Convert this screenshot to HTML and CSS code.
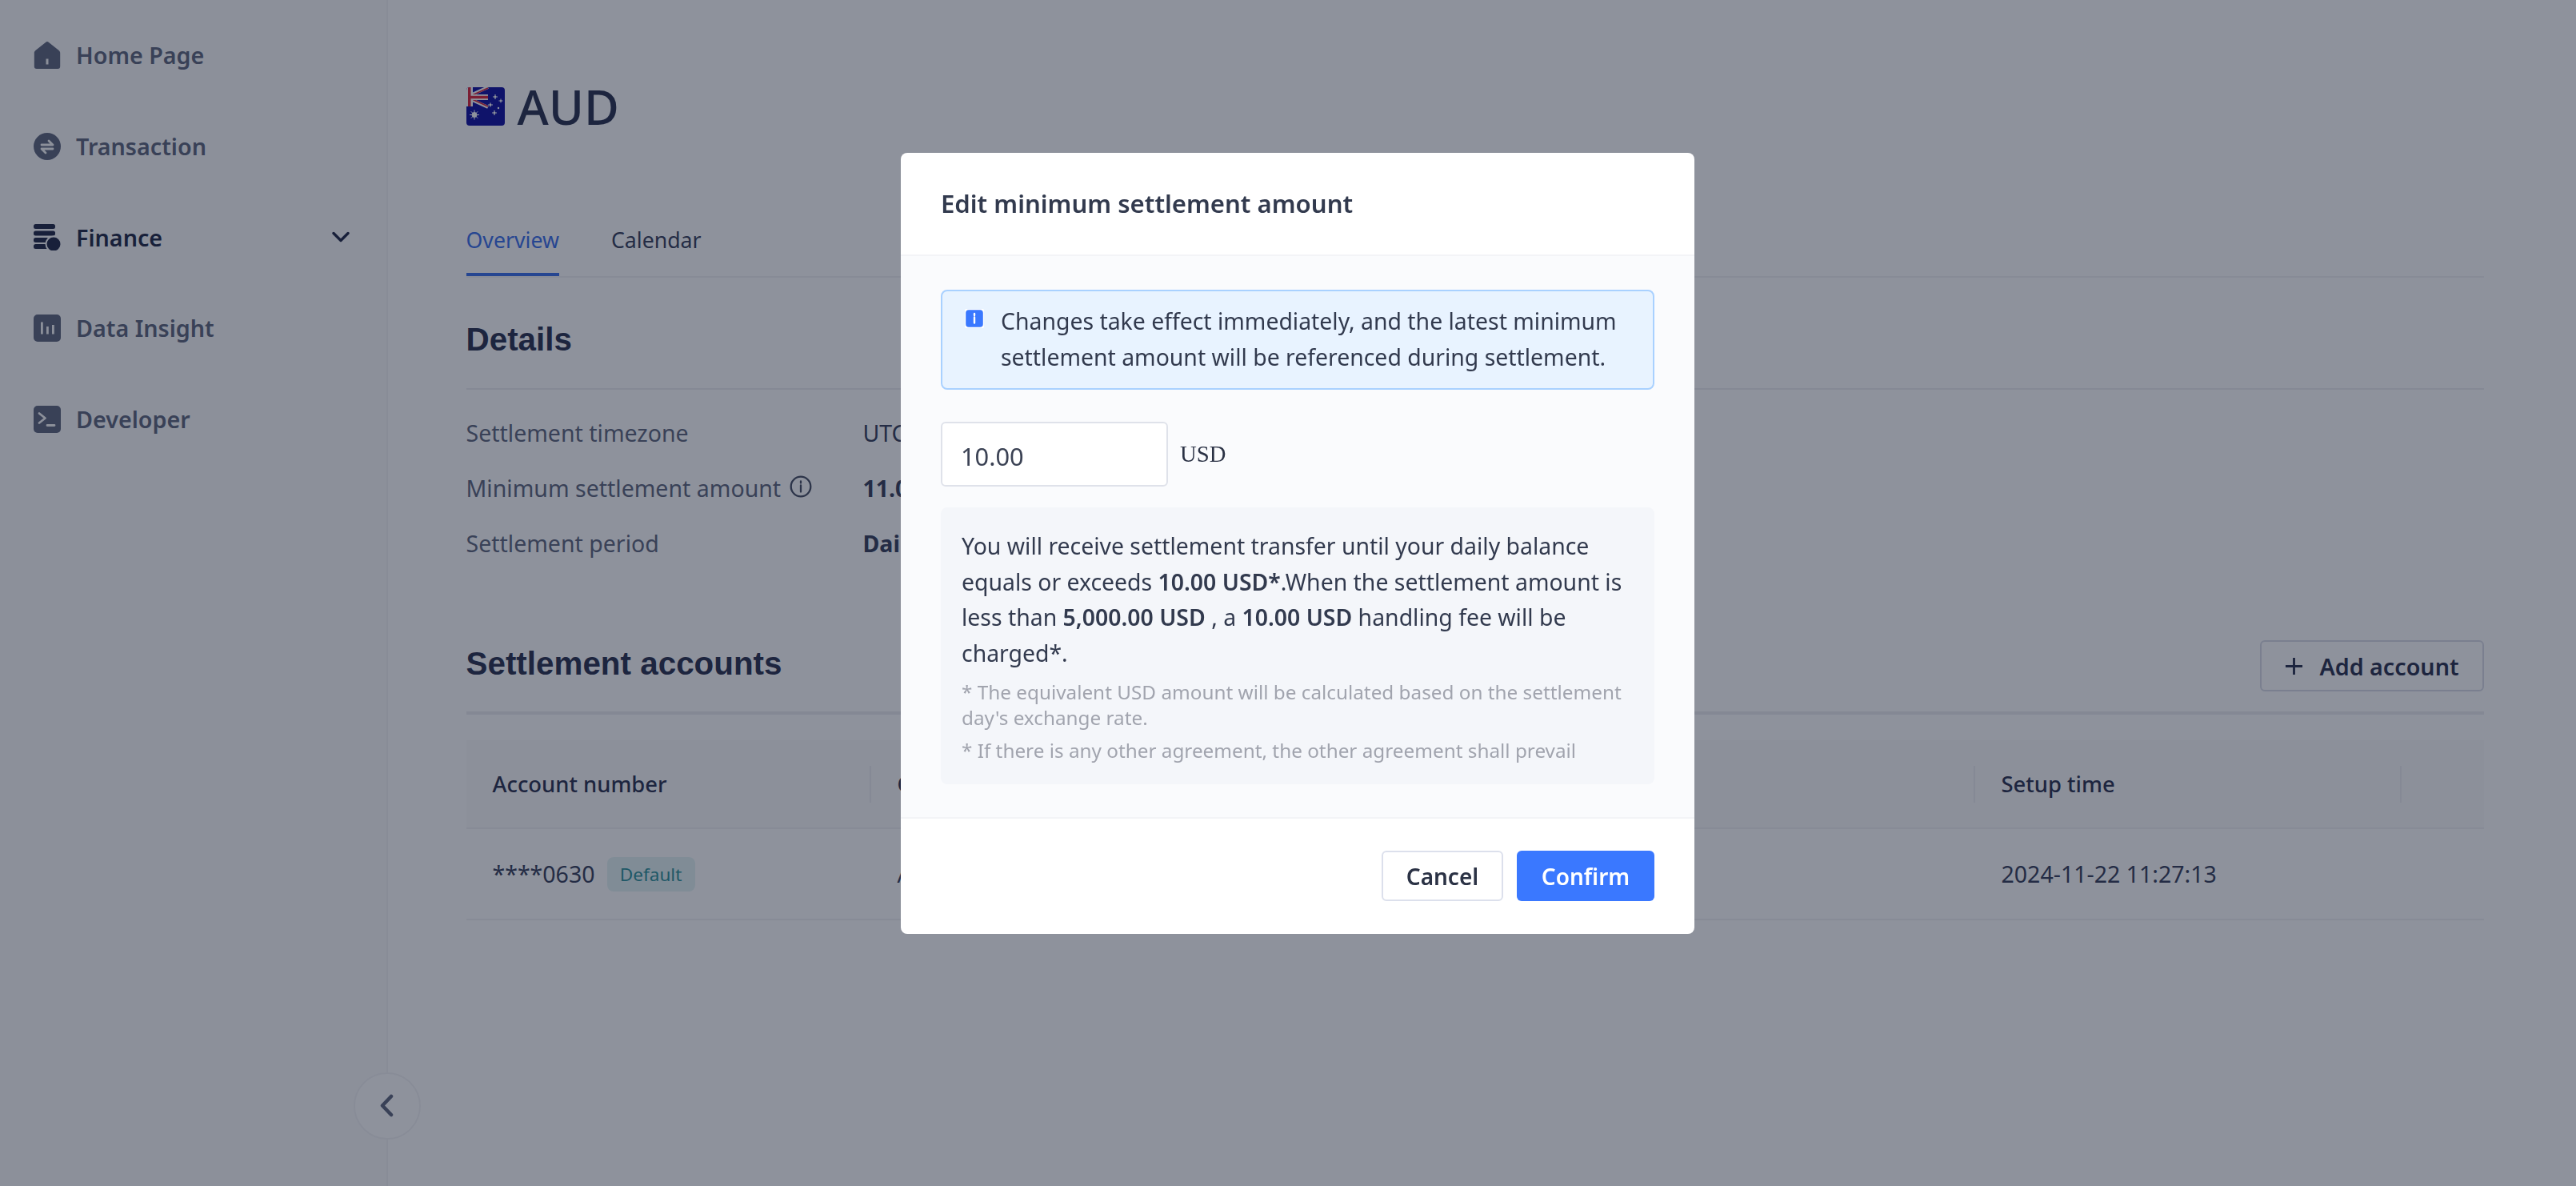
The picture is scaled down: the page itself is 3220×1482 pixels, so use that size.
FILE: index.html
```html
<!DOCTYPE html>
<html lang="en">
<head>
<meta charset="utf-8">
<title>AUD settlement</title>
<link rel="stylesheet" href="styles.css">
</head>
<body>
<div class="app">
  <aside class="sidebar">
    <nav class="nav">
      <a class="nav-item">
        <svg class="nav-icon" viewBox="0 0 34 34"><path fill-rule="evenodd" d="M15 .9a3.2 3.2 0 0 1 4 0l12.6 10.2c1 .8 1.6 2 1.6 3.3V31a3 3 0 0 1-3 3H3.800a3 3 0 0 1-3-3V14.400c0-1.300.6-2.500 1.600-3.300zM15.500 21.500v7h3v-7z"/></svg>
        <span>Home Page</span>
      </a>
      <a class="nav-item">
        <svg class="nav-icon" viewBox="0 0 34 34"><circle cx="17" cy="17" r="17"/><path class="icon-cut" d="M10 15h14l-5-5M24 20H10l5 5"/></svg>
        <span>Transaction</span>
      </a>
      <a class="nav-item nav-active">
        <svg class="nav-icon" viewBox="0 0 34 34"><rect x="0" y="1" width="27" height="6" rx="2.500"/><rect x="0" y="9.500" width="27" height="6" rx="2.500"/><rect x="0" y="18" width="27" height="6" rx="2.500"/><rect x="0" y="26" width="27" height="6" rx="2.500"/><circle class="icon-halo" cx="25" cy="26" r="10.500"/><circle cx="25" cy="26" r="8.500"/></svg>
        <span>Finance</span>
        <svg class="nav-chevron" viewBox="0 0 22 14"><path d="M2 2.500l9 9 9-9"/></svg>
      </a>
      <a class="nav-item">
        <svg class="nav-icon" viewBox="0 0 34 34"><path fill-rule="evenodd" d="M5 0h24a5 5 0 0 1 5 5v24a5 5 0 0 1-5 5H5a5 5 0 0 1-5-5V5a5 5 0 0 1 5-5zM9 9.500v15h2.800v-15zM16 15v9.500h2.800V15zM23 13v11.500h2.800V13z"/></svg>
        <span>Data Insight</span>
      </a>
      <a class="nav-item">
        <svg class="nav-icon" viewBox="0 0 34 34"><rect width="34" height="34" rx="5"/><path class="icon-cut" d="M7 9.500l7.500 6-7.500 6M17 24.500h9"/></svg>
        <span>Developer</span>
      </a>
    </nav>
    <button class="collapse" aria-label="Collapse">
      <svg viewBox="0 0 20 30"><path d="M15 3L4 14.500 15 26"/></svg>
    </button>
  </aside>

  <main class="main">
    <header class="currency">
      <svg class="flag" viewBox="0 0 48 48">
        <defs><clipPath id="flagclip"><rect width="48" height="48" rx="4"/></clipPath></defs>
        <g clip-path="url(#flagclip)">
          <rect width="48" height="48" fill="#00009a"/>
          <path d="M5 10L27 0M5 15l22 10" stroke="#fff" stroke-width="4" fill="none"/>
          <path d="M5 11L27 1M5 14l22 10" stroke="#d8172c" stroke-width="1.800" fill="none"/>
          <rect x="0" y="0" width="8" height="24" fill="#fff"/>
          <rect x="0" y="9" width="27" height="7" fill="#fff"/>
          <rect x="2" y="0" width="3.500" height="24" fill="#d8172c"/>
          <rect x="2" y="10.800" width="25" height="3.400" fill="#d8172c"/>
          <g fill="#fff" stroke="#fff">
            <circle cx="10" cy="34.500" r="3" stroke-width="1"/>
            <path d="M10 28.500v12M4 34.500h12M5.800 30.300l8.400 8.400M14.200 30.300l-8.400 8.400" stroke-width="1"/>
            <path d="M36 9v6M33 12h6" stroke-width="1.200"/><circle cx="36" cy="12" r="1.300" stroke="none"/>
            <path d="M43 14.500v5M40.500 17h5" stroke-width="1"/><circle cx="43" cy="17" r="1" stroke="none"/>
            <path d="M30 19.500v5M27 22h6" stroke-width="1.200"/><circle cx="30" cy="22" r="1.200" stroke="none"/>
            <circle cx="40" cy="26" r="1.200" stroke="none"/>
            <path d="M35 29v6M32 32h6" stroke-width="1.200"/><circle cx="35" cy="32" r="1.300" stroke="none"/>
          </g>
        </g>
      </svg>
      <h1>AUD</h1>
    </header>

    <div class="tabs">
      <a class="tab tab-active">Overview</a>
      <a class="tab">Calendar</a>
    </div>

    <section class="details">
      <div class="section-head"><h2>Details</h2></div>
      <dl class="rows">
        <div class="row"><dt>Settlement timezone</dt><dd>UTC+8</dd></div>
        <div class="row"><dt>Minimum settlement amount
          <svg class="info-icon" viewBox="0 0 28 28"><circle cx="14" cy="14" r="12.300"/><path d="M14 12.500v8M14 7.500v2"/></svg></dt><dd class="strong">11.00 USD</dd></div>
        <div class="row"><dt>Settlement period</dt><dd class="strong">Daily</dd></div>
      </dl>
    </section>

    <section class="accounts">
      <div class="section-head section-head-thick">
        <h2>Settlement accounts</h2>
        <button class="add-btn"><svg viewBox="0 0 24 24"><path d="M12 1v22M1 12h22"/></svg>Add account</button>
      </div>
      <div class="table">
        <div class="thead">
          <div class="th"><span>Account number</span></div>
          <div class="th"><span>Currency</span></div>
          <div class="th"><span>Setup time</span></div>
          <div class="th"></div>
        </div>
        <div class="tbody">
          <div class="td">****0630<span class="tag">Default</span></div>
          <div class="td">AUD</div>
          <div class="td">2024-11-22 11:27:13</div>
          <div class="td"></div>
        </div>
      </div>
    </section>
  </main>
</div>

<div class="overlay">
  <div class="modal">
    <div class="modal-head">Edit minimum settlement amount</div>
    <div class="modal-body">
      <div class="alert">
        <svg class="alert-icon" viewBox="0 0 24 24"><rect width="24" height="24" rx="5"/><path d="M12 10.500v7M12 6v2"/></svg>
        <p>Changes take effect immediately, and the latest minimum settlement amount will be referenced during settlement.</p>
      </div>
      <div class="amount">
        <input class="amount-input" type="text" value="10.00">
        <span class="amount-unit">USD</span>
      </div>
      <div class="summary">
        <p class="summary-text">You will receive settlement transfer until your daily balance equals or exceeds <b>10.00 USD*</b>.When the settlement amount is less than <b>5,000.00 USD</b> , a <b>10.00 USD</b> handling fee will be charged*.</p>
        <p class="note note-first">* The equivalent USD amount will be calculated based on the settlement day's exchange rate.</p>
        <p class="note">* If there is any other agreement, the other agreement shall prevail</p>
      </div>
    </div>
    <div class="modal-foot">
      <button class="btn btn-cancel">Cancel</button>
      <button class="btn btn-confirm">Confirm</button>
    </div>
  </div>
</div>
</body>
</html>
```
FILE: styles.css
```css
* { box-sizing: border-box; }
html, body { margin: 0; padding: 0; height: 100%; }
body {
  font-family: "Noto Sans", "Liberation Sans", sans-serif;
  color: #1c2544;
  background: #fff;
  overflow: hidden;
}
h1, h2, p, dl, dd { margin: 0; }
button { font-family: inherit; cursor: pointer; }

.app { display: flex; height: 1482px; }

/* Sidebar */
.sidebar {
  position: relative;
  flex: 0 0 485px;
  background: #fafafb;
  border-right: 2px solid #f3f3f5;
}
.nav { padding-top: 12px; }
.nav-item {
  display: flex;
  align-items: center;
  height: 113.7px;
  padding-left: 42px;
  font-size: 28.7px;
  font-weight: 600;
  color: #545c75;
}
.nav-icon { width: 34px; height: 34px; margin-right: 19px; fill: currentColor; flex: none; }
.icon-cut { fill: none; stroke: #fafafb; stroke-width: 2.800; stroke-linecap: round; stroke-linejoin: round; }
.icon-halo { fill: #fafafb; }
.nav-active { color: #131b3b; font-weight: 600; }
.nav-chevron {
  width: 22px; height: 14px; margin-left: auto; margin-right: 46px;
  fill: none; stroke: currentColor; stroke-width: 3.400; stroke-linecap: round; stroke-linejoin: round;
}
.collapse {
  position: absolute;
  left: 442px; top: 1340px;
  width: 84px; height: 84px;
  padding: 0;
  display: flex; align-items: center; justify-content: center;
  border-radius: 50%;
  border: 2px solid #f3f3f5;
  background: #fff;
}
.collapse svg {
  width: 20px; height: 30px;
  fill: none; stroke: #545c75; stroke-width: 4.500; stroke-linecap: round; stroke-linejoin: round;
}

/* Main */
.main { flex: 1; min-width: 0; padding: 109px 115px 0 97.500px; }
.currency { display: flex; align-items: center; height: 48px; }
.flag { width: 48px; height: 48px; flex: none; }
.currency h1 { margin-left: 16px; font-size: 60px; font-weight: 500; line-height: 48px; color: #1c2544; }

.tabs { display: flex; gap: 65px; margin-top: 100px; border-bottom: 2px solid #f0f0f3; }
.tab { height: 88px; line-height: 86px; font-size: 26.7px; color: #2b3350; }
.tab-active { color: #2f67e8; border-bottom: 4px solid #2f67e8; margin-bottom: -2px; }

.section-head {
  display: flex; align-items: center; justify-content: space-between;
  height: 124px;
  border-bottom: 2px solid #ecedf0;
}
.section-head h2 {
  font-family: "Liberation Sans", Arial, sans-serif;
  font-size: 40.400px; font-weight: 700; color: #1c2544;
}
.details { margin-top: 16px; }
.rows { margin-top: 19px; }
.row { display: flex; align-items: center; height: 69px; font-size: 28.500px; }
.row dt { flex: 0 0 496px; color: #545c75; display: flex; align-items: center; gap: 11px; }
.row dd { color: #2b3350; }
.row .strong { font-weight: 700; }
.info-icon { width: 28px; height: 28px; fill: none; stroke: #3a4258; stroke-width: 2.300; stroke-linecap: round; margin-top: -4px; }

.accounts { margin-top: 56px; }
.section-head-thick { border-bottom: 4px solid #eaebee; }
.add-btn {
  display: flex; align-items: center; justify-content: center;
  width: 280px; height: 64px;
  background: #fff;
  border: 2px solid #d6d9e4; border-radius: 6px;
  font-size: 28.7px; font-weight: 600; color: #1c2544;
  margin-top: 6px;
}
.add-btn svg { width: 23px; height: 23px; margin-right: 20px; fill: none; stroke: currentColor; stroke-width: 3; }

.table { margin-top: 32px; }
.thead, .tbody { display: grid; grid-template-columns: 506px 1380px 533px 104.500px; }
.thead { height: 111px; background: #fafafb; border-bottom: 2px solid #f0f0f3; align-items: center; }
.th { padding-left: 33px; height: 46px; display: flex; align-items: center; border-right: 2px solid #ecedf0; font-size: 27.400px; font-weight: 500; color: #1c2544; }
.th:last-child { border-right: 0; }
.tbody { height: 114px; border-bottom: 2px solid #f0f0f3; align-items: center; }
.td { padding-left: 33px; font-size: 28.500px; color: #2b3350; display: flex; align-items: center; }
.tag {
  margin-left: 15px; width: 110px; height: 43px;
  display: flex; align-items: center; justify-content: center;
  border-radius: 8px; background: #e2f3f3; color: #1f8a94; font-size: 22.600px;
}

/* Overlay + modal */
.overlay {
  position: fixed; inset: 0;
  background: rgba(29, 37, 57, 0.5);
  display: flex; justify-content: center; align-items: flex-start;
  padding: 191px 0 0 24px;
}
.modal {
  width: 992px; height: 976px;
  display: flex; flex-direction: column;
  background: #fff;
  border-radius: 8px;
  overflow: hidden;
  color: #323a4e;
}
.modal-head {
  flex: 0 0 129px;
  display: flex; align-items: center;
  padding: 0 50px 2px;
  font-size: 31.100px; font-weight: 600;
  border-bottom: 2px solid #f3f4f7;
}
.modal-body { flex: 1; padding: 42px 50px 0; background: #fafbfd; }
.alert {
  display: flex; gap: 21px;
  height: 125px;
  padding: 15px 28px;
  background: #e8f3ff;
  border: 2px solid #a9d1ff;
  border-radius: 8px;
  font-size: 28.400px; line-height: 45px;
}
.alert-icon { width: 24px; height: 24px; margin-top: 7px; flex: none; fill: #3a78ff; stroke: #fff; stroke-width: 2.400; stroke-linecap: round; }
.amount { display: flex; align-items: center; gap: 15px; margin-top: 40px; }
.amount-input {
  width: 284px; height: 81px;
  padding: 4px 23px 0;
  background: #fff;
  border: 2px solid #dfe2ea; border-radius: 6px;
  font-family: inherit; font-size: 30.800px; color: #3b4254;
  outline: none;
}
.amount-unit { font-family: "Liberation Serif", serif; font-size: 28.700px; color: #2b3245; margin-top: 0; }
.summary {
  margin-top: 26px;
  height: 346px;
  padding: 26px 26px;
  background: #f4f6fa;
  border-radius: 8px;
}
.summary-text { font-size: 28.400px; line-height: 44.700px; }
.summary-text b { font-weight: 600; }
.note { font-size: 24.300px; line-height: 32.500px; color: #a1a4ae; }
.note-first { margin-top: 10px; margin-bottom: 8px; }
.modal-foot {
  flex: 0 0 146px;
  display: flex; justify-content: flex-end; align-items: flex-start; gap: 17px;
  padding: 40px 50px 0;
  border-top: 2px solid #f3f4f7;
}
.btn { height: 63px; border-radius: 6px; font-size: 28px; font-weight: 600; }
.btn-cancel { width: 152px; background: #fff; border: 2px solid #dce0ec; color: #2b3245; }
.btn-confirm { width: 172px; background: #3a78ff; border: 0; color: #fff; }
```
